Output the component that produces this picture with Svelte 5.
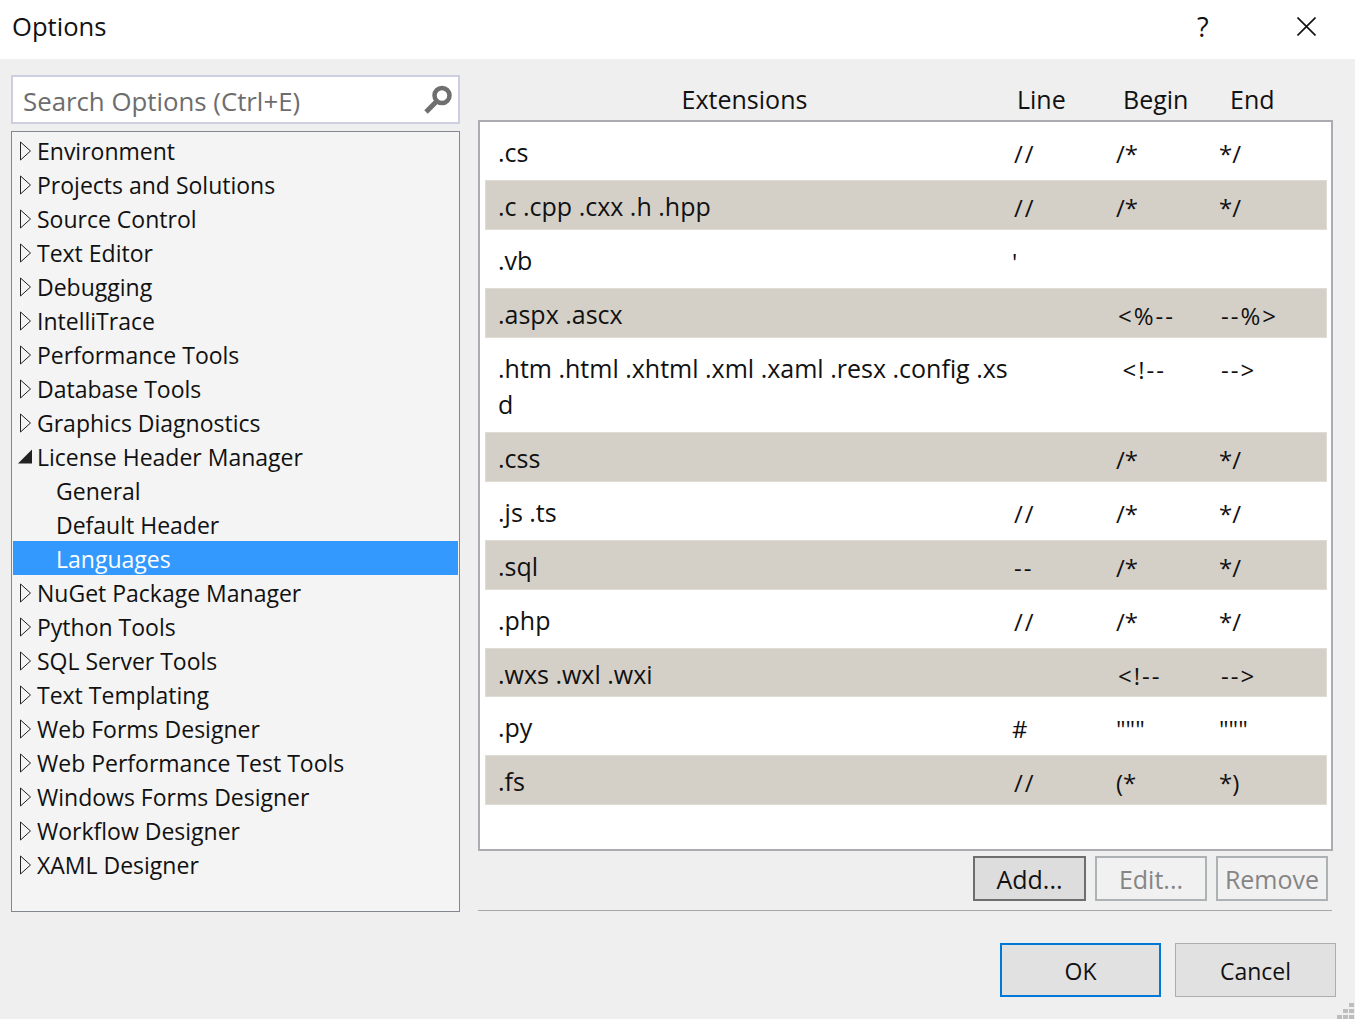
<script>
const tree = [
  { label: "Environment" },
  { label: "Projects and Solutions" },
  { label: "Source Control" },
  { label: "Text Editor" },
  { label: "Debugging" },
  { label: "IntelliTrace" },
  { label: "Performance Tools" },
  { label: "Database Tools" },
  { label: "Graphics Diagnostics" },
  { label: "License Header Manager", open: true },
  { label: "General", child: true },
  { label: "Default Header", child: true },
  { label: "Languages", child: true, selected: true },
  { label: "NuGet Package Manager" },
  { label: "Python Tools" },
  { label: "SQL Server Tools" },
  { label: "Text Templating" },
  { label: "Web Forms Designer" },
  { label: "Web Performance Test Tools" },
  { label: "Windows Forms Designer" },
  { label: "Workflow Designer" },
  { label: "XAML Designer" },
]

const languages = [
  { ext: ".cs", line: "//", begin: "/*", end: "*/" },
  { ext: ".c .cpp .cxx .h .hpp", line: "//", begin: "/*", end: "*/" },
  { ext: ".vb", line: "'", begin: "", end: "" },
  { ext: ".aspx .ascx", line: "", begin: "<%--", end: "--%>" },
  { ext: ".htm .html .xhtml .xml .xaml .resx .config .xs\nd", line: "", begin: "\u200a<!--", end: "-->" },
  { ext: ".css", line: "", begin: "/*", end: "*/" },
  { ext: ".js .ts", line: "//", begin: "/*", end: "*/" },
  { ext: ".sql", line: "--", begin: "/*", end: "*/" },
  { ext: ".php", line: "//", begin: "/*", end: "*/" },
  { ext: ".wxs .wxl .wxi", line: "", begin: "<!--", end: "-->" },
  { ext: ".py", line: "#", begin: '"""', end: '"""' },
  { ext: ".fs", line: "//", begin: "(*", end: "*)" },
]

// dashes and double slashes run wider in the original font
const wide = (s) => s.includes("--") || s === "//"
</script>

<main class="dialog">
  <header class="titlebar">
    <span class="title">Options</span>
    <span class="help">?</span>
    <svg class="close" width="19" height="19" viewBox="0 0 19 19">
      <path d="M0.5 0.5 L18.5 18.5 M18.5 0.5 L0.5 18.5" stroke="#111" stroke-width="1.6" fill="none" />
    </svg>
  </header>

  <div class="content">
    <aside class="side">
      <div class="search">
        <span class="placeholder">Search Options (Ctrl+E)</span>
        <svg width="30" height="30" viewBox="0 0 30 30">
          <circle cx="19" cy="10.5" r="7.5" stroke="#6f6f6f" stroke-width="4.5" fill="none" />
          <path d="M13 17 L3 27" stroke="#6f6f6f" stroke-width="5" fill="none" />
        </svg>
      </div>

      <nav class="tree">
        {#each tree as item}
          <div class="node" class:child={item.child} class:selected={item.selected}>
            {#if !item.child}
              <svg class="twisty" width="14" height="20" viewBox="0 0 14 20">
                {#if item.open}
                  <path d="M0 16.5 L14 16.5 L14 2.5 Z" fill="#222" />
                {:else}
                  <path d="M2.5 1 L12.5 10 L2.5 19 Z" fill="none" stroke="#222" stroke-width="1" />
                {/if}
              </svg>
            {/if}
            <span class="label">{item.label}</span>
          </div>
        {/each}
      </nav>
    </aside>

    <section class="panel">
      <div class="head">
        <span class="head-ext">Extensions</span>
        <span>Line</span>
        <span>Begin</span>
        <span>End</span>
      </div>

      <div class="list">
        {#each languages as lang, i}
          <div class="row" class:alt={i % 2 === 1}>
            <span class="ext">{lang.ext}</span>
            <span class="cell" class:wide={wide(lang.line)}>{lang.line}</span>
            <span class="cell" class:wide={wide(lang.begin)}>{lang.begin}</span>
            <span class="cell" class:wide={wide(lang.end)}>{lang.end}</span>
          </div>
        {/each}
      </div>

      <div class="actions">
        <button class="small default">Add...</button>
        <button class="small" disabled>Edit...</button>
        <button class="small" disabled>Remove</button>
      </div>
      <div class="rule"></div>
    </section>
  </div>

  <footer class="footer">
    <button class="big primary">OK</button>
    <button class="big">Cancel</button>
  </footer>

  <svg class="grip" width="19" height="16" viewBox="0 0 19 16">
    <g fill="#bdbdbd">
      <rect x="13" y="0" width="5" height="4" />
      <rect x="7" y="6" width="5" height="4" />
      <rect x="13" y="6" width="5" height="4" />
      <rect x="1" y="12" width="5" height="4" />
      <rect x="7" y="12" width="5" height="4" />
      <rect x="13" y="12" width="5" height="4" />
    </g>
  </svg>
</main>

<style>
:global(body) {
  margin: 0;
  background: #efefef;
}

.dialog {
  position: relative;
  width: 1355px;
  height: 1019px;
  overflow: hidden;
  background: #efefef;
  color: #111;
  font-family: "Open Sans", "Noto Sans", sans-serif;
  font-size: 23px;
}

.titlebar {
  display: flex;
  align-items: center;
  height: 59px;
  padding: 0 39px 6px 12px;
  box-sizing: border-box;
  background: #fff;
}

.title {
  flex: 1;
  font-size: 25.6px;
}

.help {
  width: 100px;
  font-size: 27px;
}

.content {
  display: flex;
  gap: 18px;
  padding: 16px 0 0 11px;
}

.side {
  display: flex;
  flex-direction: column;
  gap: 7px;
  width: 449px;
}

.search {
  display: flex;
  align-items: center;
  justify-content: space-between;
  height: 49px;
  box-sizing: border-box;
  padding: 0 5px 0 10px;
  border: 2px solid #cdcfe0;
  background: #fff;
  color: #6d6d6d;
  font-size: 25.8px;
}

.placeholder {
  position: relative;
  top: 1px;
}

.tree {
  height: 781px;
  box-sizing: border-box;
  padding: 1px;
  border: 1px solid #828790;
  background: #f4f4f4;
}

.node {
  display: flex;
  align-items: center;
  height: 34px;
  padding-left: 5px;
  gap: 5px;
}

.node.child {
  padding-left: 43px;
}

.node.selected {
  background: #3399ff;
  color: #fff;
}

.label {
  padding-top: 2px;
}

.twisty {
  flex: none;
  margin-top: 1px;
}

.panel {
  display: flex;
  flex-direction: column;
  width: 855px;
}

.head {
  display: grid;
  grid-template-columns: 539px 106px 107px 1fr;
  height: 45px;
  line-height: 48px;
  font-size: 25px;
}

.head-ext {
  text-align: center;
  padding-right: 6px;
}

.list {
  height: 731px;
  box-sizing: border-box;
  border: 2px solid #ababb2;
  background: #fff;
}

.row {
  display: grid;
  grid-template-columns: 514px 104px 103px 1fr;
  margin: 0 4px 0 5px;
  padding: 12px 13px 10px;
  line-height: 36px;
  font-size: 25px;
}

.row.alt {
  padding: 8px 13px 6px;
  background: #d4d0c8;
  box-shadow: inset 0 0 0 1px #dfdcd5;
}

.row.alt:nth-child(10) {
  padding-bottom: 5px;
}

.ext {
  white-space: pre-line;
}

.cell {
  padding-top: 4px;
  line-height: 32px;
  white-space: pre;
  font-size: 24px;
}

.cell.wide {
  letter-spacing: 2px;
  padding-left: 2px;
}

.actions {
  display: flex;
  gap: 9px;
  margin-top: 5px;
  padding-left: 495px;
}

.rule {
  height: 1px;
  margin-top: 9px;
  margin-right: 1px;
  background: #a8a8a8;
}

button {
  box-sizing: border-box;
  padding: 0;
  font-family: inherit;
  color: #111;
}

.small {
  width: 112px;
  height: 45px;
  border: 2px solid #adb2b5;
  background: #f1f1f1;
  font-size: 25px;
}

.small:disabled {
  color: #858585;
}

.small.default {
  width: 113px;
  border-color: #6e6e6e;
  background: #dddddd;
}

.footer {
  display: flex;
  justify-content: flex-end;
  gap: 14px;
  margin-top: 31px;
  padding-right: 19px;
}

.big {
  width: 161px;
  height: 54px;
  padding-top: 2px;
  border: 1px solid #adadad;
  background: #e1e1e1;
  font-size: 23px;
}

.big.primary {
  border: 2px solid #0078d7;
}

.grip {
  position: absolute;
  right: 0;
  bottom: 0;
}
</style>
